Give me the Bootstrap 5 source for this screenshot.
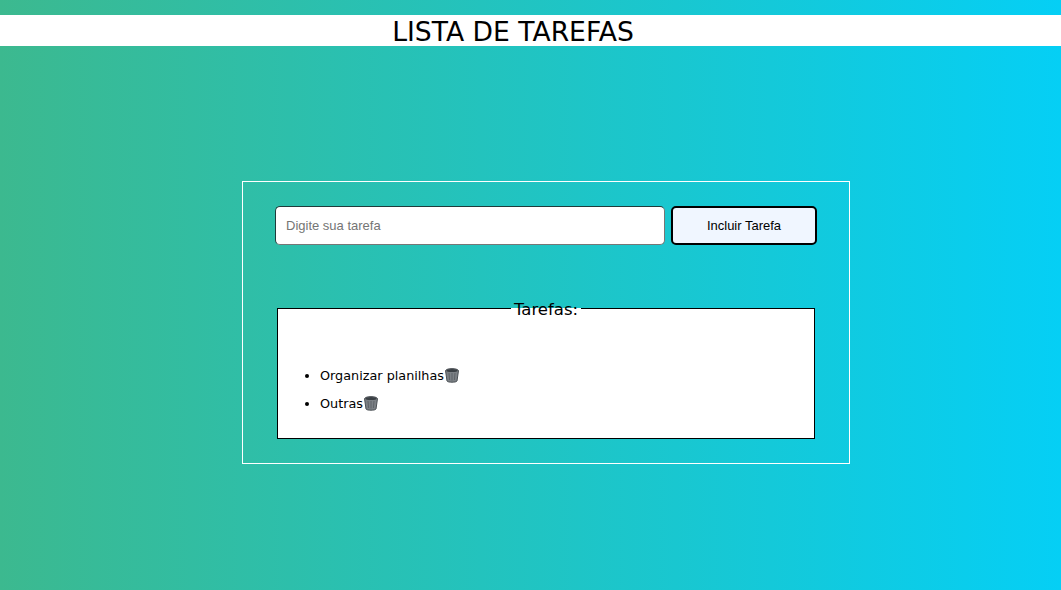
<!DOCTYPE html>
<html lang="pt-BR">
<head>
    <meta charset="UTF-8">
    <meta name="viewport" content="width=device-width, initial-scale=1.0">
    <title>Lista de Tarefas</title>
    <link href="https://cdn.jsdelivr.net/npm/bootstrap@5.3.0/dist/css/bootstrap.min.css" rel="stylesheet">
    <style>
        html, body {
            height: 100%;
        }
        body {
            background: linear-gradient(to right, #3cb98f, #05cff5);
            font-family: "DejaVu Sans", Verdana, sans-serif;
            color: #000;
            padding-top: 15px;
        }
        .titulo {
            background-color: #fff;
            height: 31px;
            margin: 0 0 135px;
            padding-right: 35px;
            font-family: "DejaVu Sans", Verdana, sans-serif;
            font-size: 26.6px;
            font-weight: 400;
            line-height: 34px;
            text-align: center;
        }
        .painel {
            width: 608px;
            height: 283px;
            margin-left: 242px;
            border: 1px solid #fff;
            padding: 24px 32px 0;
        }
        .campo {
            width: 390px;
            height: 39px;
            padding: 0 10px;
            font-family: "Liberation Sans", Arial, sans-serif;
            font-size: 13px;
            border: 1px solid;
            border-color: #1f3b3a #767676 #767676 #1f3b3a;
            border-radius: 5px;
            background-color: #fff;
        }
        .campo::placeholder {
            color: #757575;
        }
        .botao {
            width: 146px;
            height: 39px;
            font-family: "Liberation Sans", Arial, sans-serif;
            font-size: 13px;
            color: #000;
            background-color: #f0f6ff;
            border: 2px solid #000;
            border-radius: 5px;
        }
        .grupo {
            width: 538px;
            height: 141px;
            margin: 53px 0 0 2px;
            padding: 0;
            background-color: #fff;
            border: 1px solid #000;
        }
        .grupo legend {
            float: none;
            width: auto;
            margin: 0 auto;
            padding: 2px 3px 0;
            font-size: 16.5px;
            line-height: 19px;
        }
        .tarefas {
            margin: 43px 0 0;
            padding-left: 42px;
            font-size: 12.8px;
        }
        .tarefas li {
            height: 28px;
            line-height: 28px;
        }
        .lixeira {
            width: 16px;
            height: 16px;
            vertical-align: -3px;
        }
    </style>
</head>
<body>
    <h1 class="titulo">LISTA DE TAREFAS</h1>

    <main class="painel">
        <form class="d-flex gap-1" autocomplete="off" onsubmit="return false">
            <input type="text" class="campo me-auto" placeholder="Digite sua tarefa">
            <button type="submit" class="botao">Incluir Tarefa</button>
        </form>

        <fieldset class="grupo">
            <legend>Tarefas:</legend>
            <ul class="tarefas">
                <li>Organizar planilhas<svg class="lixeira" viewBox="0 0 16 16" aria-hidden="true"><path d="M1.500 3.500C3 1 13 1 14.500 3.500L13 14c-.3 1.600-9.700 1.600-10 0z" fill="#7b8085" stroke="#4a4f54"/><ellipse cx="8" cy="3.400" rx="5.600" ry="1.500" fill="#3a3f44"/><path d="M5 6l.6 7M8 6v7.500M11 6l-.6 7" stroke="#5f6368"/></svg></li>
                <li>Outras<svg class="lixeira" viewBox="0 0 16 16" aria-hidden="true"><path d="M1.500 3.500C3 1 13 1 14.500 3.500L13 14c-.3 1.600-9.700 1.600-10 0z" fill="#7b8085" stroke="#4a4f54"/><ellipse cx="8" cy="3.400" rx="5.600" ry="1.500" fill="#3a3f44"/><path d="M5 6l.6 7M8 6v7.500M11 6l-.6 7" stroke="#5f6368"/></svg></li>
            </ul>
        </fieldset>
    </main>

    <script src="https://cdn.jsdelivr.net/npm/bootstrap@5.3.0/dist/js/bootstrap.bundle.min.js"></script>
</body>
</html>
